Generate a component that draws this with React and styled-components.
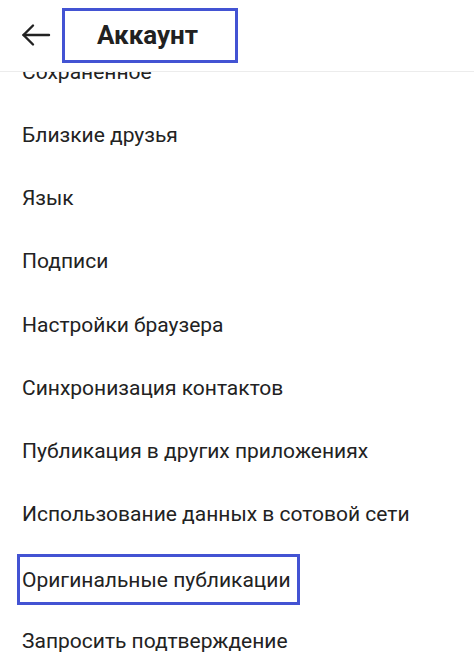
import React from "react";
import styled, { createGlobalStyle } from "styled-components";

const Global = createGlobalStyle`
  html, body { margin: 0; padding: 0; background: #fff; }
  body { font-family: Roboto, "Noto Sans", sans-serif; color: #212121; }
  * { box-sizing: border-box; }
`;

const Screen = styled.div`
  width: 474px;
  height: 670px;
  overflow: hidden;
  display: flex;
  flex-direction: column;
  background: #fff;
`;

const Header = styled.header`
  position: relative;
  z-index: 2;
  flex: none;
  height: 72px;
  display: flex;
  align-items: center;
  padding-left: 21px;
  background: #fff;
  border-bottom: 1px solid #ececec;
`;

const BackButton = styled.button`
  border: 0;
  background: none;
  padding: 0;
  width: 30px;
  height: 24px;
  display: flex;
  align-items: center;
  justify-content: center;
  color: #222;
  margin-top: -1px;
`;

const TitleBox = styled.div`
  margin-left: 11px;
  width: 176px;
  height: 55px;
  margin-top: -1px;
  border: 3px solid #4353d3;
  display: flex;
  align-items: center;
  padding-left: 32px;
`;

const Title = styled.h1`
  margin: 0;
  font-size: 26px;
  font-weight: 700;
  color: #212121;
  letter-spacing: 0;
`;

const Viewport = styled.div`
  flex: 1;
  overflow: hidden;
`;

const List = styled.ul`
  list-style: none;
  margin: -32px 0 0;
  padding: 0;
`;

const Row = styled.li`
  height: 63.25px;
  display: flex;
  align-items: center;
  padding-left: ${(p) => (p.$highlight ? "17px" : "22px")};
  font-size: 21px;
  color: #222;
`;

const Highlight = styled.span`
  display: inline-flex;
  align-items: center;
  height: 51px;
  margin-top: 4px;
  border: 3px solid #4353d3;
  padding: 0 6px 0 2px;
`;

const items = [
  "Сохраненное",
  "Близкие друзья",
  "Язык",
  "Подписи",
  "Настройки браузера",
  "Синхронизация контактов",
  "Публикация в других приложениях",
  "Использование данных в сотовой сети",
  "Оригинальные публикации",
  "Запросить подтверждение",
];

export default function App() {
  return (
    <Screen>
      <Global />
      <Header>
        <BackButton aria-label="Назад">
          <svg width="30" height="24" viewBox="0 0 30 24" fill="none" stroke="currentColor" strokeWidth="2.4" strokeLinecap="round" strokeLinejoin="round">
            <path d="M28 12H2.5" />
            <path d="M12 2.5L2.5 12L12 21.5" />
          </svg>
        </BackButton>
        <TitleBox>
          <Title>Аккаунт</Title>
        </TitleBox>
      </Header>
      <Viewport>
        <List>
          {items.map((t) =>
            t === "Оригинальные публикации" ? (
              <Row key={t} $highlight>
                <Highlight>{t}</Highlight>
              </Row>
            ) : (
              <Row key={t}>{t}</Row>
            )
          )}
        </List>
      </Viewport>
    </Screen>
  );
}
